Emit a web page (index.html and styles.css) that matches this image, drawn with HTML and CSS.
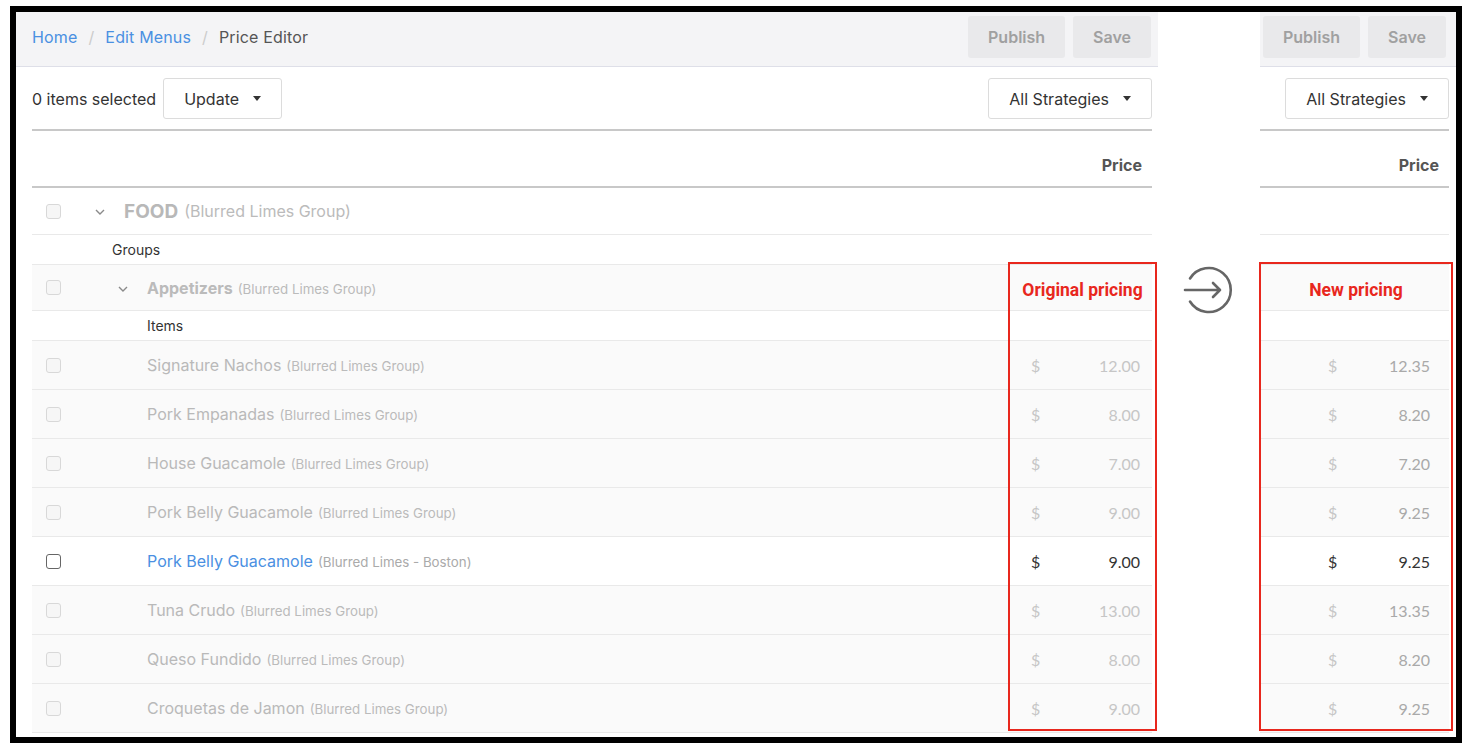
FILE: index.html
```html
<!DOCTYPE html>
<html>
<head>
    <title>Price Editor</title>
    <link rel="stylesheet" href="styles.css">
</head>
<body>

<div class="frame">

    <!-- Original pricing -->
    <div class="panel main">
        <div class="topbar">
            <div class="crumbs">
                <a href="#">Home</a><span class="sep">/</span><a href="#">Edit Menus</a><span class="sep">/</span><span class="current">Price Editor</span>
            </div>
            <div class="actions">
                <button class="btn-flat">Publish</button>
                <button class="btn-flat">Save</button>
            </div>
        </div>
        <div class="content">
            <div class="toolbar">
                <span class="count">0 items selected</span>
                <button class="dropdown">Update <span class="caret"></span></button>
                <button class="dropdown push">All Strategies <span class="caret"></span></button>
            </div>
            <div class="thead"><span>Price</span></div>

            <div class="row row-cat">
                <span class="chk"></span>
                <svg class="chev chev-cat" width="10" height="6" viewBox="0 0 10 6"><polyline points="1,1 5,5 9,1"/></svg>
                <span class="cat-name">FOOD</span><span class="cat-note">(Blurred Limes Group)</span>
            </div>
            <div class="row row-label"><span class="label lbl-groups">Groups</span></div>
            <div class="row row-sub dim">
                <span class="chk"></span>
                <svg class="chev chev-sub" width="10" height="6" viewBox="0 0 10 6"><polyline points="1,1 5,5 9,1"/></svg>
                <span class="sub-name">Appetizers</span><span class="note">(Blurred Limes Group)</span>
            </div>
            <div class="row row-label"><span class="label lbl-items">Items</span></div>

            <div class="row row-item dim">
                <span class="chk"></span>
                <span class="item-name">Signature Nachos</span><span class="note">(Blurred Limes Group)</span>
                <div class="price"><span>$</span><span>12.00</span></div>
            </div>
            <div class="row row-item dim">
                <span class="chk"></span>
                <span class="item-name">Pork Empanadas</span><span class="note">(Blurred Limes Group)</span>
                <div class="price"><span>$</span><span>8.00</span></div>
            </div>
            <div class="row row-item dim">
                <span class="chk"></span>
                <span class="item-name">House Guacamole</span><span class="note">(Blurred Limes Group)</span>
                <div class="price"><span>$</span><span>7.00</span></div>
            </div>
            <div class="row row-item dim">
                <span class="chk"></span>
                <span class="item-name">Pork Belly Guacamole</span><span class="note">(Blurred Limes Group)</span>
                <div class="price"><span>$</span><span>9.00</span></div>
            </div>
            <div class="row row-item active">
                <span class="chk"></span>
                <a href="#" class="item-name">Pork Belly Guacamole</a><span class="note">(Blurred Limes - Boston)</span>
                <div class="price"><span>$</span><span>9.00</span></div>
            </div>
            <div class="row row-item dim">
                <span class="chk"></span>
                <span class="item-name">Tuna Crudo</span><span class="note">(Blurred Limes Group)</span>
                <div class="price"><span>$</span><span>13.00</span></div>
            </div>
            <div class="row row-item dim">
                <span class="chk"></span>
                <span class="item-name">Queso Fundido</span><span class="note">(Blurred Limes Group)</span>
                <div class="price"><span>$</span><span>8.00</span></div>
            </div>
            <div class="row row-item dim">
                <span class="chk"></span>
                <span class="item-name">Croquetas de Jamon</span><span class="note">(Blurred Limes Group)</span>
                <div class="price"><span>$</span><span>9.00</span></div>
            </div>
        </div>

        <div class="annot annot-old"><div class="annot-label">Original pricing</div></div>
    </div>

    <!-- Arrow between the two -->
    <div class="gap">
        <svg class="arrow" width="52" height="52" viewBox="0 0 52 52">
            <path d="M7 14.5 A22 22 0 1 1 7 37.5"/>
            <path d="M2 26 H37 M30 19 L37 26 L30 33"/>
        </svg>
    </div>

    <!-- New pricing -->
    <div class="panel side">
        <div class="topbar">
            <div class="actions">
                <button class="btn-flat">Publish</button>
                <button class="btn-flat">Save</button>
            </div>
        </div>
        <div class="content">
            <div class="toolbar">
                <button class="dropdown push">All Strategies <span class="caret"></span></button>
            </div>
            <div class="thead"><span>Price</span></div>

            <div class="row row-cat"></div>
            <div class="row row-label"></div>
            <div class="row row-sub dim"></div>
            <div class="row row-label"></div>

            <div class="row row-item dim"><div class="price"><span>$</span><span class="val">12.35</span></div></div>
            <div class="row row-item dim"><div class="price"><span>$</span><span class="val">8.20</span></div></div>
            <div class="row row-item dim"><div class="price"><span>$</span><span class="val">7.20</span></div></div>
            <div class="row row-item dim"><div class="price"><span>$</span><span class="val">9.25</span></div></div>
            <div class="row row-item active"><div class="price"><span>$</span><span class="val">9.25</span></div></div>
            <div class="row row-item dim"><div class="price"><span>$</span><span class="val">13.35</span></div></div>
            <div class="row row-item dim"><div class="price"><span>$</span><span class="val">8.20</span></div></div>
            <div class="row row-item dim"><div class="price"><span>$</span><span class="val">9.25</span></div></div>
        </div>

        <div class="annot annot-new"><div class="annot-label">New pricing</div></div>
    </div>

</div>

</body>
</html>
```

FILE: styles.css
```css
/* Price editor, before / after */
body {
    margin: 0;
    font-family: Inter, "Liberation Sans", sans-serif;
    color: #333;
    background: #fff;
}
a {
    color: #4a90e2;
    text-decoration: none;
}
button {
    font-family: inherit;
    cursor: pointer;
}

.frame {
    margin: 6px 0 0 10px;
    width: 1440px;
    height: 725px;
    border: 6px solid #000;
    display: flex;
    overflow: hidden;
}
.panel {
    position: relative;
    flex: none;
}
.main {
    width: 1142px;
}
.side {
    width: 196px;
}
.gap {
    width: 102px;
    flex: none;
    display: flex;
    justify-content: center;
    align-items: flex-start;
    padding-top: 252px;
    box-sizing: border-box;
}
.arrow {
    fill: none;
    stroke: #666;
    stroke-width: 2.6;
    stroke-linecap: round;
    stroke-linejoin: round;
}

/* top bar */
.topbar {
    height: 55px;
    box-sizing: border-box;
    background: #f4f4f6;
    border-bottom: 1px solid #dedfe8;
    display: flex;
    justify-content: space-between;
    align-items: flex-start;
    padding: 4px 7px 0 16px;
}
.side .topbar {
    padding: 4px 8px 0 3px;
}
.crumbs {
    line-height: 42px;
    font-size: 16px;
    letter-spacing: 0.15px;
}
.crumbs .sep {
    color: #ccc;
    margin: 0 11px;
}
.crumbs .current {
    color: #555;
}
.actions {
    display: flex;
    gap: 8px;
}
.btn-flat {
    height: 42px;
    padding: 0 20px;
    border: none;
    border-radius: 3px;
    background: #e9e9eb;
    color: #a0a0a0;
    font-size: 16px;
    font-weight: 600;
}

/* toolbar */
.content {
    padding: 0 6px 0 16px;
}
.side .content {
    padding: 0 7px 0 0;
}
.toolbar {
    height: 64px;
    box-sizing: border-box;
    border-bottom: 2px solid #c8c8c8;
    display: flex;
    align-items: center;
    padding-top: 1px;
}
.count {
    font-size: 16px;
    margin-right: 7px;
}
.dropdown {
    height: 41px;
    border: 1px solid #dcdcdc;
    border-radius: 3px;
    background: #fff;
    color: #333;
    font-size: 16px;
    padding: 0 20px;
    display: flex;
    align-items: center;
    gap: 14px;
}
.dropdown.push {
    margin-left: auto;
}
.caret {
    width: 0;
    height: 0;
    border-left: 4px solid transparent;
    border-right: 4px solid transparent;
    border-top: 5px solid #333;
}

/* table */
.thead {
    height: 57px;
    box-sizing: border-box;
    border-bottom: 2px solid #c8c8c8;
    text-align: right;
    padding: 24px 10px 0 0;
    font-size: 16px;
    font-weight: 700;
    color: #555;
    line-height: 20px;
}
.row {
    display: flex;
    align-items: center;
    box-sizing: border-box;
    border-bottom: 1px solid #e9e9e9;
    white-space: nowrap;
}
.row.dim {
    background: #fafafa;
}
.row-cat {
    height: 47px;
}
.row-label {
    height: 30px;
}
.row-sub {
    height: 46px;
}
.row-item {
    height: 49px;
}

.chk {
    flex: none;
    width: 15px;
    height: 15px;
    box-sizing: border-box;
    margin-left: 14px;
    border: 1px solid #d8d8d8;
    border-radius: 3px;
    background: #f6f6f6;
}
.active .chk {
    border-color: #666;
    background: #fff;
}
.chev {
    flex: none;
    fill: none;
    stroke: #8a8a8a;
    stroke-width: 1.4;
}
.chev-cat {
    margin: 2px 0 0 34px;
}
.chev-sub {
    margin: 2px 0 0 57px;
}

.cat-name {
    margin-left: 19px;
    font-size: 19px;
    font-weight: 700;
    color: #b8b8b8;
}
.cat-note {
    margin-left: 6px;
    font-size: 16px;
    color: #bbb;
}
.sub-name {
    margin-left: 19px;
    font-size: 16px;
    font-weight: 700;
    color: #bbb;
}
.label {
    font-size: 14px;
    color: #333;
}
.lbl-groups {
    padding-left: 80px;
}
.lbl-items {
    padding-left: 115px;
}
.item-name {
    margin-left: 86px;
    font-size: 16px;
    color: #b9b9b9;
}
.note {
    margin-left: 5px;
    font-size: 13.3px;
    color: #bbb;
    padding-top: 2px;
}
.active .note {
    color: #aaa;
}
.active .item-name {
    color: #4a90e2;
}

.price {
    margin-left: auto;
    width: 141px;
    box-sizing: border-box;
    padding: 0 12px 0 20px;
    display: flex;
    justify-content: space-between;
    font-family: Lato, "Liberation Sans", sans-serif;
    font-size: 16px;
    color: #c6c6c6;
}
.active .price {
    color: #333;
}
.side .price {
    width: 189px;
    padding: 0 19px 0 68px;
}
.side .val {
    color: #a9a9a9;
}
.side .active .val {
    color: #333;
}

/* red call-outs */
.annot {
    position: absolute;
    top: 250px;
    height: 469px;
    box-sizing: border-box;
    border: 2px solid #e8271d;
}
.annot-old {
    left: 992px;
    width: 149px;
}
.annot-new {
    left: -1px;
    width: 194px;
}
.annot-label {
    margin-top: 16px;
    text-align: center;
    font-family: Roboto, "Liberation Sans", sans-serif;
    font-size: 17.5px;
    font-weight: 700;
    line-height: 20px;
    color: #e8271d;
}
```
